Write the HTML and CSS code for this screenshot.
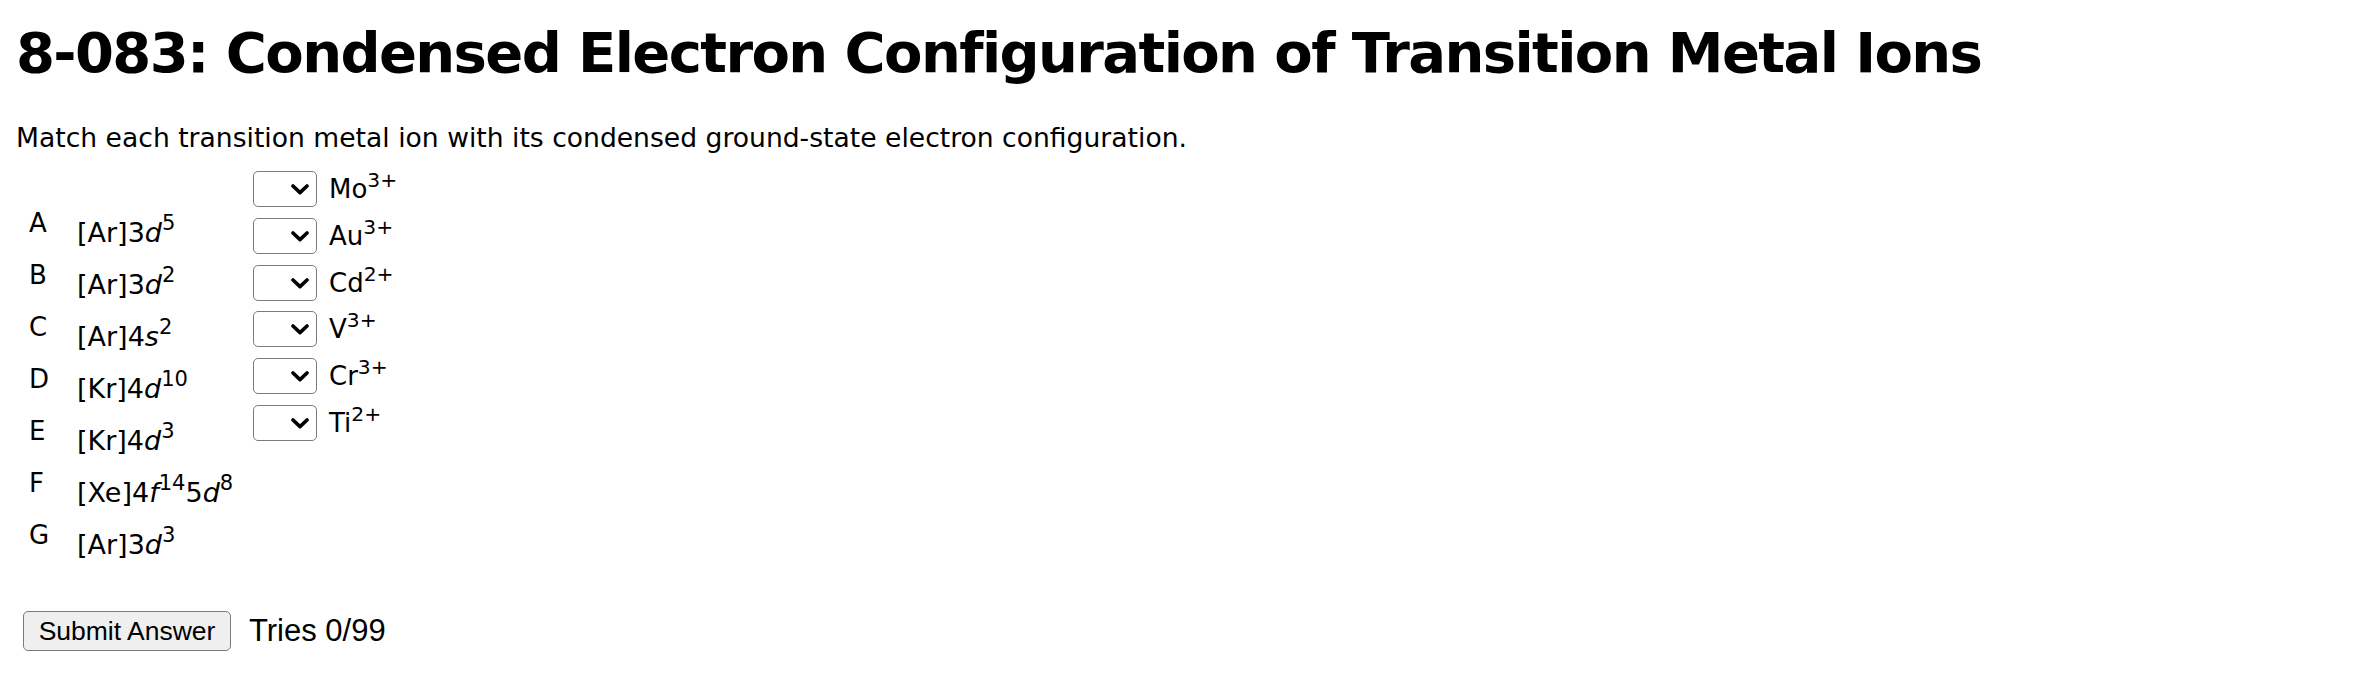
FILE: index.html
```
<!DOCTYPE html>
<html lang="en">
<head>
<meta charset="utf-8">
<title>8-083: Condensed Electron Configuration of Transition Metal Ions</title>
<link rel="stylesheet" href="styles.css">
</head>
<body>
<main class="page">
  <h1 class="title">8-083: Condensed Electron Configuration of Transition Metal Ions</h1>
  <p class="prompt">Match each transition metal ion with its condensed ground-state electron configuration.</p>

  <div class="match">
    <ol class="options">
      <li class="opt"><span class="letter">A</span><span class="formula">[Ar]3<i>d</i><sup>5</sup></span></li>
      <li class="opt"><span class="letter">B</span><span class="formula">[Ar]3<i>d</i><sup>2</sup></span></li>
      <li class="opt"><span class="letter">C</span><span class="formula">[Ar]4<i>s</i><sup>2</sup></span></li>
      <li class="opt"><span class="letter">D</span><span class="formula">[Kr]4<i>d</i><sup>10</sup></span></li>
      <li class="opt"><span class="letter">E</span><span class="formula">[Kr]4<i>d</i><sup>3</sup></span></li>
      <li class="opt"><span class="letter">F</span><span class="formula">[Xe]4<i>f</i><sup>14</sup>5<i>d</i><sup>8</sup></span></li>
      <li class="opt"><span class="letter">G</span><span class="formula">[Ar]3<i>d</i><sup>3</sup></span></li>
    </ol>

    <ul class="targets">
      <li class="pair"><span class="sel"><select aria-label="Mo3+"><option></option><option>A</option><option>B</option><option>C</option><option>D</option><option>E</option><option>F</option><option>G</option></select><svg class="chev" viewBox="0 0 18 11" width="18" height="11"><path d="M2 2 L9 8.6 L16 2"/></svg></span><span class="ion">Mo<sup>3+</sup></span></li>
      <li class="pair"><span class="sel"><select aria-label="Au3+"><option></option><option>A</option><option>B</option><option>C</option><option>D</option><option>E</option><option>F</option><option>G</option></select><svg class="chev" viewBox="0 0 18 11" width="18" height="11"><path d="M2 2 L9 8.6 L16 2"/></svg></span><span class="ion">Au<sup>3+</sup></span></li>
      <li class="pair"><span class="sel"><select aria-label="Cd2+"><option></option><option>A</option><option>B</option><option>C</option><option>D</option><option>E</option><option>F</option><option>G</option></select><svg class="chev" viewBox="0 0 18 11" width="18" height="11"><path d="M2 2 L9 8.6 L16 2"/></svg></span><span class="ion">Cd<sup>2+</sup></span></li>
      <li class="pair"><span class="sel"><select aria-label="V3+"><option></option><option>A</option><option>B</option><option>C</option><option>D</option><option>E</option><option>F</option><option>G</option></select><svg class="chev" viewBox="0 0 18 11" width="18" height="11"><path d="M2 2 L9 8.6 L16 2"/></svg></span><span class="ion">V<sup>3+</sup></span></li>
      <li class="pair"><span class="sel"><select aria-label="Cr3+"><option></option><option>A</option><option>B</option><option>C</option><option>D</option><option>E</option><option>F</option><option>G</option></select><svg class="chev" viewBox="0 0 18 11" width="18" height="11"><path d="M2 2 L9 8.6 L16 2"/></svg></span><span class="ion">Cr<sup>3+</sup></span></li>
      <li class="pair"><span class="sel"><select aria-label="Ti2+"><option></option><option>A</option><option>B</option><option>C</option><option>D</option><option>E</option><option>F</option><option>G</option></select><svg class="chev" viewBox="0 0 18 11" width="18" height="11"><path d="M2 2 L9 8.6 L16 2"/></svg></span><span class="ion">Ti<sup>2+</sup></span></li>
    </ul>
  </div>

  <div class="actions">
    <button class="submit" type="button">Submit Answer</button>
    <span class="tries">Tries 0/99</span>
  </div>
</main>
</body>
</html>
```

FILE: styles.css
```
html, body {
  margin: 0;
  padding: 0;
  background: #ffffff;
  color: #000000;
}

.page {
  padding: 20px 16px 0 16px;
  font-family: "DejaVu Sans", Verdana, sans-serif;
  font-size: 26px;
}

.title {
  margin: 0;
  font-family: "DejaVu Sans", Verdana, sans-serif;
  font-weight: bold;
  font-size: 56px;
  line-height: 65px;
  letter-spacing: -1.6px;
}

.prompt {
  margin: 38px 0 0 0;
  font-size: 26.6px;
  line-height: 30px;
}

.match {
  display: flex;
  align-items: flex-start;
  margin-top: 18px;
}

.options {
  list-style: none;
  margin: 37px 0 0 0;
  padding: 0 0 0 13px;
  width: 224px;
}

.opt {
  display: flex;
  align-items: flex-start;
  height: 52px;
}

.letter {
  width: 48px;
  line-height: 30px;
}

.formula {
  padding-top: 10px;
  line-height: 30px;
  white-space: nowrap;
  font-size: 27px;
}

.formula i {
  font-style: italic;
}

sup {
  font-size: 0.78em;
  line-height: 0;
  vertical-align: 0.55em;
}

.targets {
  list-style: none;
  margin: 0;
  padding: 0;
  display: flex;
  flex-direction: column;
  gap: 10.8px;
}

.pair {
  display: flex;
  align-items: center;
  height: 36px;
}

.sel {
  position: relative;
  display: inline-block;
  width: 64px;
  height: 36px;
}

.sel select {
  appearance: none;
  -webkit-appearance: none;
  width: 64px;
  height: 36px;
  margin: 0;
  border: 1.7px solid #7b7b7b;
  border-radius: 5px;
  background: #ffffff;
  font-family: "DejaVu Sans", Verdana, sans-serif;
  font-size: 20px;
  color: transparent;
}

.chev {
  position: absolute;
  right: 8px;
  top: 13px;
  pointer-events: none;
}

.chev path {
  fill: none;
  stroke: #000000;
  stroke-width: 3.6;
  stroke-linecap: round;
  stroke-linejoin: round;
}

.ion {
  margin-left: 12px;
  line-height: 30px;
}

.actions {
  display: flex;
  align-items: center;
  margin-top: 39px;
  padding-left: 7px;
}

.submit {
  width: 208px;
  height: 40px;
  margin: 0;
  padding: 0;
  border: 1.7px solid #7b7b7b;
  border-radius: 5px;
  background: #efefef;
  font-family: "Liberation Sans", Arial, sans-serif;
  font-size: 26.5px;
  color: #000000;
}

.tries {
  margin-left: 18px;
  font-family: "Liberation Sans", Arial, sans-serif;
  font-size: 31px;
}
```
